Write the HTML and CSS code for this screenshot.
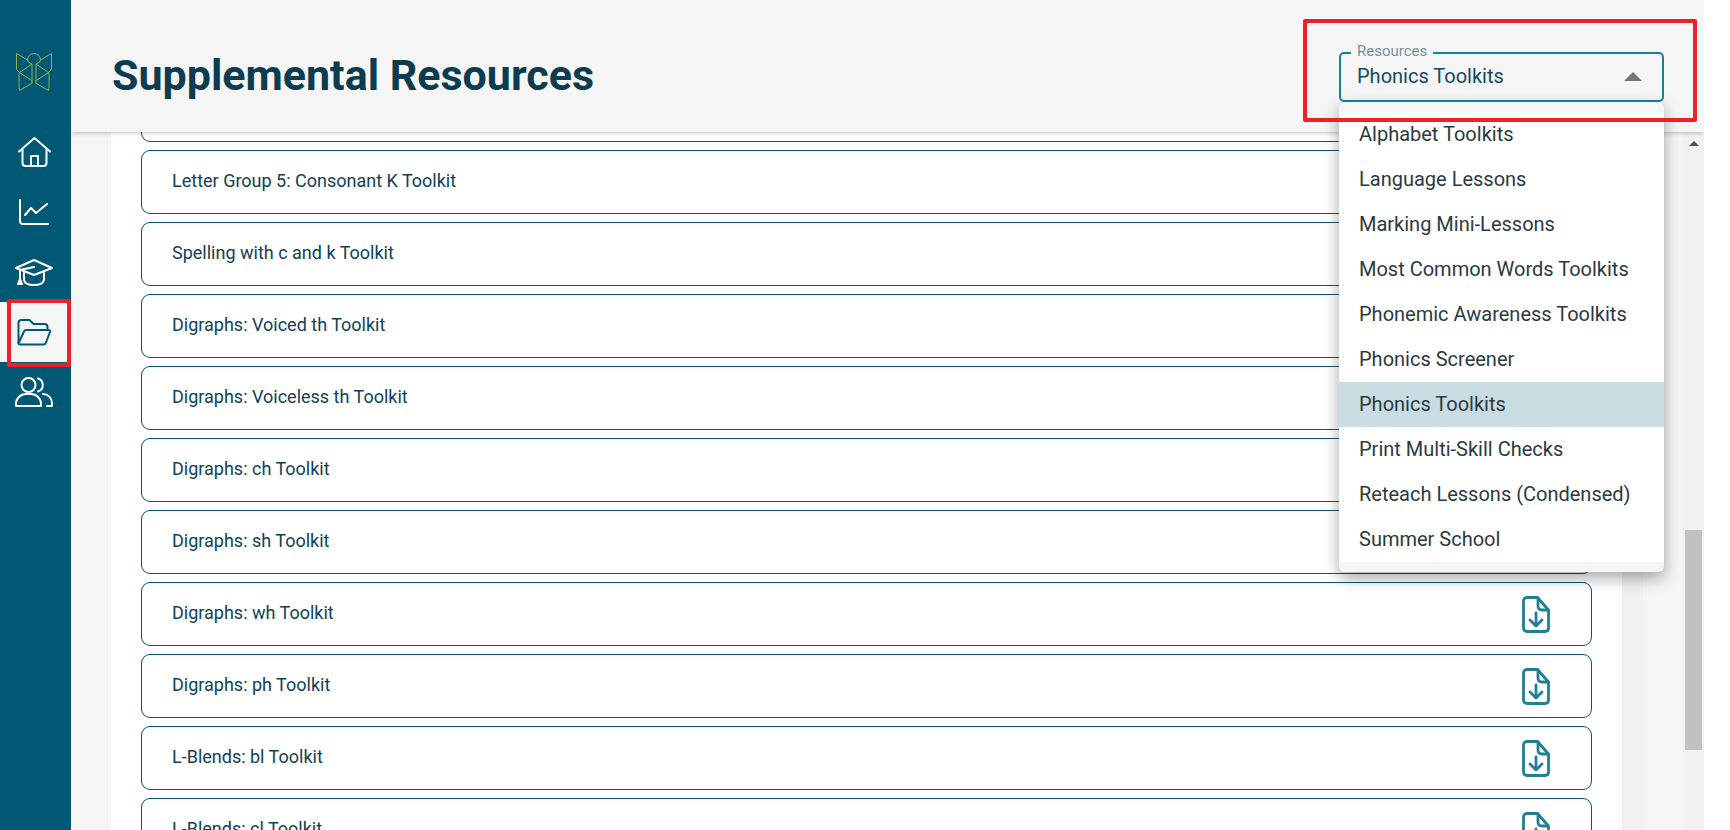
FILE: index.html
```html
<!DOCTYPE html>
<html lang="en">
<head>
  <meta charset="UTF-8">
  <meta name="viewport" content="width=device-width, initial-scale=1.0">
  <title>Supplemental Resources</title>
  <link rel="stylesheet" href="styles.css">
</head>
<body>
  <div class="app">
    <!-- Sidebar -->
    <div class="sidebar">
      <div class="logo">
        <svg width="36" height="38" viewBox="0 0 36 38" fill="none" stroke="#8fb24f" stroke-width="1">
          <path d="M0.500 0.500 11.500 7M0.500 0.500V15q0 2.500 3 4.500L16.500 28"/>
          <path d="M3.500 19.500q-.5 1-.5 3V33q0 2 .5 4.500L16.500 30M3.500 19.500 16 11"/>
          <path d="M35.500 0.500 24.500 7M35.500 0.500V15q0 2.500-3 4.500L19.500 28"/>
          <path d="M32.500 19.500q.5 1 .5 3V33q0 2-.5 4.500L19.500 30M32.500 19.500 20 11"/>
          <path d="M11.500 7a6.500 6.500 0 0 1 13 0q0 2.500-4.500 4V30M11.500 7q0 2.500 4.500 4V30"/>
        </svg>
      </div>
      <div class="nav-item">
        <svg width="33" height="30" viewBox="0 0 33 30" fill="none" stroke="#fff" stroke-width="2" stroke-linecap="round" stroke-linejoin="round">
          <path d="M1 14.500 16.500 1 32 14.500"/>
          <path d="M4.500 12v14q0 3 3 3h18q3 0 3-3V12"/>
          <path d="M13 29V19h7v10"/>
        </svg>
      </div>
      <div class="nav-item">
        <svg width="30" height="26" viewBox="0 0 30 26" fill="none" stroke="#fff" stroke-width="2" stroke-linecap="round" stroke-linejoin="round">
          <path d="M1 1v21q0 3 3 3h25"/>
          <path d="M6 16l6-7 5 5L28 5"/>
        </svg>
      </div>
      <div class="nav-item">
        <svg width="38" height="27" viewBox="0 0 38 27" fill="none" stroke="#fff" stroke-width="2" stroke-linecap="round" stroke-linejoin="round">
          <path d="M19 1l18 8-18 7L1 9z"/>
          <path d="M19 8 5 11v9"/>
          <path d="M9 14v7q1 5 10 5t10-5v-7"/>
          <path d="M5 20l-2 5h4z" fill="#fff"/>
        </svg>
      </div>
      <div class="nav-item active">
        <svg width="34" height="27" viewBox="0 0 34 27" fill="none" stroke="#005875" stroke-width="2" stroke-linecap="round" stroke-linejoin="round">
          <path d="M1.500 24V4q0-3 3-3h8l4 4h11q3 0 3 3v3"/>
          <path d="M1.500 24 7 12.500q.6-1.500 2-1.500h22q2.500 0 2 2l-4 10.500q-.6 2-2.500 2H3.500q-2 0-2-1.500z"/>
        </svg>
      </div>
      <div class="nav-item">
        <svg width="38" height="30" viewBox="0 0 38 30" fill="none" stroke="#fff" stroke-width="2" stroke-linecap="round" stroke-linejoin="round">
          <circle cx="13.500" cy="8" r="7"/>
          <path d="M23 1.500a6.800 6.800 0 0 1 0 13"/>
          <path d="M1 29v-2a10 10 0 0 1 10-10h5a10 10 0 0 1 10 10v2z"/>
          <path d="M28 17a9 9 0 0 1 9 9v3h-5"/>
        </svg>
      </div>
    </div>

    <!-- Main -->
    <div class="main">
      <div class="header">
        <h1>Supplemental Resources</h1>
        <div class="select">
          <span class="select-label">Resources</span>
          <span class="select-value">Phonics Toolkits</span>
          <span class="select-arrow"></span>
          <div class="menu">
            <ul>
              <li>Alphabet Toolkits</li>
              <li>Language Lessons</li>
              <li>Marking Mini-Lessons</li>
              <li>Most Common Words Toolkits</li>
              <li>Phonemic Awareness Toolkits</li>
              <li>Phonics Screener</li>
              <li class="selected">Phonics Toolkits</li>
              <li>Print Multi-Skill Checks</li>
              <li>Reteach Lessons (Condensed)</li>
              <li>Summer School</li>
            </ul>
          </div>
        </div>
      </div>

      <div class="content">
        <div class="panel">
          <div class="list">
            <div class="row"><span></span><svg class="doc"><use href="#doc-icon"/></svg></div>
            <div class="row"><span>Letter Group 5: Consonant K Toolkit</span><svg class="doc"><use href="#doc-icon"/></svg></div>
            <div class="row"><span>Spelling with c and k Toolkit</span><svg class="doc"><use href="#doc-icon"/></svg></div>
            <div class="row"><span>Digraphs: Voiced th Toolkit</span><svg class="doc"><use href="#doc-icon"/></svg></div>
            <div class="row"><span>Digraphs: Voiceless th Toolkit</span><svg class="doc"><use href="#doc-icon"/></svg></div>
            <div class="row"><span>Digraphs: ch Toolkit</span><svg class="doc"><use href="#doc-icon"/></svg></div>
            <div class="row"><span>Digraphs: sh Toolkit</span><svg class="doc"><use href="#doc-icon"/></svg></div>
            <div class="row"><span>Digraphs: wh Toolkit</span><svg class="doc"><use href="#doc-icon"/></svg></div>
            <div class="row"><span>Digraphs: ph Toolkit</span><svg class="doc"><use href="#doc-icon"/></svg></div>
            <div class="row"><span>L-Blends: bl Toolkit</span><svg class="doc"><use href="#doc-icon"/></svg></div>
            <div class="row"><span>L-Blends: cl Toolkit</span><svg class="doc"><use href="#doc-icon"/></svg></div>
          </div>
        </div>
        <div class="gutter"></div>
        <div class="spacer"></div>
        <div class="scrollbar">
          <span class="scroll-up"></span>
          <div class="scroll-thumb"></div>
        </div>
      </div>
    </div>

    <!-- Red annotation boxes -->
    <div class="callout callout-nav"></div>
    <div class="callout callout-select"></div>
  </div>

  <svg width="0" height="0" class="defs">
    <symbol id="doc-icon" viewBox="0 0 28 37">
      <g fill="none" stroke="#1f8092" stroke-width="2.800" stroke-linecap="round" stroke-linejoin="round">
        <path d="M5 1.500h10.500L26.500 14v18q0 3.500-3.500 3.500H5q-3.500 0-3.500-3.500V5q0-3.500 3.500-3.500z"/>
        <path d="M16 2V10q0 4 4 4h6"/>
        <path d="M14 17v12.500M8 24l6 6 6-6"/>
      </g>
    </symbol>
  </svg>
</body>
</html>
```

FILE: styles.css
```css
body {
  margin: 0;
  background-color: #fff;
  font-family: Roboto, "Liberation Sans", sans-serif;
  overflow: hidden;
}

.app {
  display: flex;
  position: relative;
  width: 1704px;
  height: 830px;
  overflow: hidden;
}

.defs {
  position: absolute;
}

/* Sidebar */
.sidebar {
  width: 71px;
  flex-shrink: 0;
  background-color: #005875;
  z-index: 3;
}

.logo {
  height: 122px;
  display: flex;
  align-items: center;
  justify-content: center;
  padding: 22px 3px 0 0;
  box-sizing: border-box;
}

.nav-item {
  height: 60px;
  display: flex;
  align-items: center;
  justify-content: center;
  padding-right: 3px;
}

.nav-item.active {
  background-color: #f5f5f5;
}

/* Header */
.main {
  flex: 1;
  display: flex;
  flex-direction: column;
  min-width: 0;
}

.header {
  height: 132px;
  flex-shrink: 0;
  box-sizing: border-box;
  display: flex;
  justify-content: space-between;
  align-items: flex-start;
  padding: 52px 40px 0 41px;
  background-color: #f5f5f5;
  box-shadow: 0 1px 4px rgba(0, 0, 0, 0.25);
  position: relative;
  z-index: 2;
}

.header h1 {
  margin: 0;
  font-size: 43px;
  line-height: 46px;
  font-weight: 700;
  color: #0b3c4f;
}

.select {
  position: relative;
  width: 325px;
  height: 50px;
  box-sizing: border-box;
  border: 2px solid #1a8094;
  border-radius: 5px;
  padding-left: 16px;
}

.select-label {
  position: absolute;
  left: 10px;
  top: -11px;
  padding: 0 6px;
  font-size: 15px;
  line-height: 16px;
  color: #7b8f99;
  background-color: #f5f5f5;
}

.select-value {
  display: block;
  margin-top: 10px;
  font-size: 20px;
  line-height: 24px;
  color: #124a60;
}

.select-arrow {
  position: absolute;
  right: 20px;
  top: 18px;
  border-left: 9px solid transparent;
  border-right: 9px solid transparent;
  border-bottom: 9px solid #757575;
}

.menu {
  position: absolute;
  left: -2px;
  top: 48px;
  width: 325px;
  padding: 10px 0;
  background-color: #f5f5f5;
  border-radius: 6px;
  box-shadow: 0 6px 16px rgba(0, 0, 0, 0.35);
}

.menu ul {
  margin: 0;
  padding: 0;
  list-style: none;
  background-color: #fff;
}

.menu li {
  height: 45px;
  line-height: 45px;
  padding-left: 20px;
  font-size: 20px;
  color: #2b3a42;
}

.menu li.selected {
  background-color: #c8dce1;
}

/* Content */
.content {
  flex: 1;
  display: flex;
  min-height: 0;
  padding-left: 40px;
  background-color: #f5f5f5;
}

.panel {
  width: 1511px;
  flex-shrink: 0;
  overflow: hidden;
  background-color: #fff;
}

.list {
  margin-top: -54px;
  padding: 0 30px;
  display: flex;
  flex-direction: column;
  gap: 8px;
}

.row {
  height: 64px;
  flex-shrink: 0;
  box-sizing: border-box;
  display: flex;
  align-items: center;
  justify-content: space-between;
  padding: 0 41px 0 30px;
  border: 1.400px solid #005875;
  border-radius: 9px;
  font-size: 18px;
  color: #0f4257;
}

.row span {
  margin-bottom: 4px;
}

.doc {
  width: 28px;
  height: 37px;
}

.gutter {
  width: 21px;
  flex-shrink: 0;
  background-color: #f0f0f0;
}

.spacer {
  width: 40px;
  flex-shrink: 0;
}

.scrollbar {
  width: 21px;
  flex-shrink: 0;
  display: flex;
  flex-direction: column;
  align-items: center;
  background-color: #f1f1f1;
}

.scroll-up {
  margin-top: 9px;
  border-left: 5px solid transparent;
  border-right: 5px solid transparent;
  border-bottom: 5px solid #505050;
}

.scroll-thumb {
  width: 17px;
  height: 220px;
  margin-top: 384px;
  background-color: #c1c1c1;
}

/* Annotations */
.callout {
  position: absolute;
  box-sizing: border-box;
  border: 4px solid #ee2128;
  border-radius: 2px;
  z-index: 5;
}

.callout-nav {
  left: 7px;
  top: 299px;
  width: 64px;
  height: 68px;
}

.callout-select {
  left: 1303px;
  top: 19px;
  width: 394px;
  height: 103px;
}
```
